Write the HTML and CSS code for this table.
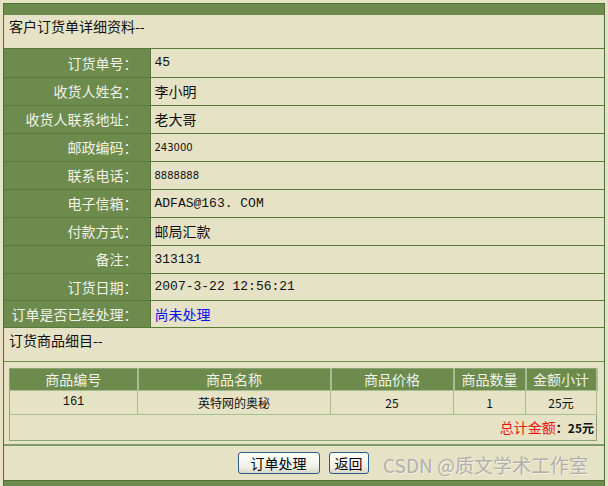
FILE: index.html
```html
<!DOCTYPE html>
<html>
<head>
<meta charset="utf-8">
<link rel="stylesheet" href="styles.css">
</head>
<body>
<div class="frame">
  <div class="topbar"></div>
  <div class="title">客户订货单详细资料--</div>
  <table class="detail">
    <tr><th>订货单号：</th><td class="mono">45</td></tr>
    <tr><th>收货人姓名：</th><td class="cjk">李小明</td></tr>
    <tr><th>收货人联系地址：</th><td class="cjk">老大哥</td></tr>
    <tr><th>邮政编码：</th><td class="small">243000</td></tr>
    <tr><th>联系电话：</th><td class="small">8888888</td></tr>
    <tr><th>电子信箱：</th><td class="mono">ADFAS@163. COM</td></tr>
    <tr><th>付款方式：</th><td class="cjk">邮局汇款</td></tr>
    <tr><th>备注：</th><td class="mono">313131</td></tr>
    <tr class="short"><th>订货日期：</th><td class="mono">2007-3-22 12:56:21</td></tr>
    <tr class="short"><th>订单是否已经处理：</th><td class="cjk link">尚未处理</td></tr>
  </table>
  <div class="section">订货商品细目--</div>
  <div class="items">
    <table class="goods">
      <colgroup>
        <col class="c1"><col class="c2"><col class="c3"><col class="c4"><col class="c5">
      </colgroup>
      <tr class="head"><th>商品编号</th><th>商品名称</th><th>商品价格</th><th>商品数量</th><th>金额小计</th></tr>
      <tr class="data"><td class="num">161</td><td>英特网的奥秘</td><td>25</td><td>1</td><td>25元</td></tr>
      <tr class="total"><td colspan="5"><span class="red">总计金额</span><span class="sum">：25元</span></td></tr>
    </table>
  </div>
  <div class="actions">
    <button class="btn wide">订单处理</button>
    <button class="btn">返回</button>
  </div>
  <div class="bottombar"></div>
  <div class="watermark">CSDN @质文学术工作室</div>
</div>
</body>
</html>
```
FILE: styles.css
```css
html, body {
  margin: 0;
  padding: 0;
  background: #e6e2c5;
  font-family: "Noto Sans CJK SC", "Noto Sans", sans-serif;
  color: #111;
}
.frame {
  position: relative;
  margin: 3px 0 0 3px;
  width: 600px;
  border-left: 1px solid #4f6f33;
  border-right: 1px solid #4f6f33;
  height: 483px;
  display: flex;
  flex-direction: column;
}
.topbar {
  height: 12px;
  background: #6c8b4c;
  border-top: 1px solid #4f6f33;
  box-sizing: border-box;
}
.title {
  height: 34px;
  padding: 1px 0 0 5px;
  box-sizing: border-box;
  font-size: 14px;
  line-height: 20px;
  border-bottom: 1px solid #587a3a;
}
.detail {
  width: 100%;
  border-collapse: collapse;
}
.detail tr {
  height: 28px;
}
.detail tr.short {
  height: 27px;
}
.detail th {
  width: 146px;
  padding: 0 12px 0 0;
  box-sizing: border-box;
  text-align: right;
  font-weight: normal;
  font-size: 14px;
  color: #f2f2ea;
  background: #6c8b4c;
  border-bottom: 1px solid #587a3a;
  border-right: 1px solid #587a3a;
}
.detail td {
  padding: 0 0 0 4px;
  border-bottom: 1px solid #587a3a;
}
.detail td.mono {
  font-family: "Liberation Mono", "DejaVu Sans Mono", monospace;
  font-size: 13px;
}
.detail td.small {
  font-family: "DejaVu Sans", sans-serif;
  font-size: 10px;
}
.detail td.cjk {
  font-size: 14px;
}
.detail td.link {
  color: #1010ee;
}
.section {
  height: 34px;
  padding: 2px 0 0 5px;
  box-sizing: border-box;
  font-size: 14px;
  line-height: 20px;
  border-bottom: 1px solid #6d8c52;
}
.items {
  height: 84px;
  padding: 6px 8px 0 5px;
  box-sizing: border-box;
  border-bottom: 2px solid #7f9b66;
}
.goods {
  width: 587px;
  border-collapse: collapse;
  table-layout: fixed;
  border: 1px solid #8aa571;
}
.goods .c1 { width: 128px; }
.goods .c2 { width: 193px; }
.goods .c3 { width: 123px; }
.goods .c4 { width: 72px; }
.goods .c5 { width: 71px; }
.goods tr.head {
  height: 22px;
}
.goods th {
  background: #6c8b4c;
  color: #f2f2ea;
  font-weight: normal;
  font-size: 14px;
  line-height: 18px;
  padding: 0;
  border-right: 2px solid #a9bd93;
  border-bottom: 1px solid #a9bd93;
}
.goods tr.data {
  height: 24px;
}
.goods tr.data td {
  text-align: center;
  font-size: 12px;
  border-right: 1px solid #a9bd93;
  border-bottom: 1px solid #a9bd93;
  padding: 0;
}
.goods td.num {
  font-family: "Liberation Mono", monospace;
  font-size: 11px;
}
.goods tr.total {
  height: 26px;
}
.goods tr.total td {
  text-align: right;
  padding: 0 2px 0 0;
  font-size: 14px;
}
.red {
  color: #f01010;
}
.sum {
  font-size: 12px;
  font-weight: bold;
}
.actions {
  height: 34px;
  display: flex;
  justify-content: center;
  align-items: center;
  gap: 9px;
  box-sizing: border-box;
}
.btn {
  height: 22px;
  width: 40px;
  padding: 0;
  font-family: "Noto Sans CJK SC", sans-serif;
  font-size: 14px;
  line-height: 18px;
  color: #000;
  border: 1px solid #2c5a89;
  border-radius: 3px;
  background: linear-gradient(#ffffff, #f0f0ea 70%, #d8d6c8);
}
.btn.wide {
  width: 82px;
  margin-left: -2px;
}
.bottombar {
  flex: 1;
  background: #6c8b4c;
  border-top: 1px solid #4f6f33;
}
.watermark {
  position: absolute;
  left: 379px;
  top: 448px;
  font-family: "Noto Sans CJK SC", sans-serif;
  font-size: 19px;
  color: rgba(160, 160, 160, 0.8);
  text-shadow: 1px 1px 0 rgba(255, 255, 255, 0.5);
  white-space: nowrap;
}
```
